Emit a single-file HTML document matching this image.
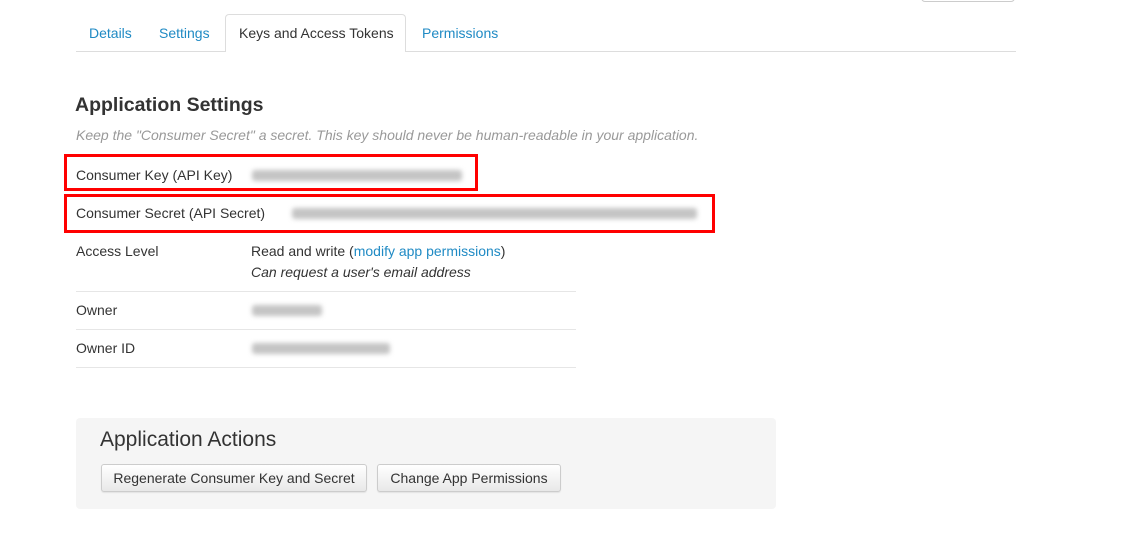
<!DOCTYPE html>
<html><head><style>
body{margin:0;width:1126px;height:534px;background:#fff;font-family:"Liberation Sans",sans-serif;font-size:14px;color:#333;position:relative;overflow:hidden}
.a{position:absolute}
.tab{position:absolute;top:25px;color:#1f8ac4;font-size:14px}
.blur{position:absolute;height:11px;background:#c4c4c4;filter:blur(2.5px);border-radius:3px}
.hr{position:absolute;left:76px;width:500px;height:1px;background:#e6e6e6}
.btn{position:absolute;top:464px;height:28px;border:1px solid #ccc;border-radius:3px;background:linear-gradient(#fff,#e8e8e8);box-sizing:border-box;font-size:14px;line-height:27px;text-align:center;color:#333;box-shadow:0 1px 1px rgba(0,0,0,.08)}
</style></head><body>
<div class="a" style="left:921px;top:-6px;width:94px;height:8px;border:1px solid #ccc;border-radius:4px;box-sizing:border-box"></div>
<div class="a" style="left:76px;top:51px;width:940px;height:1px;background:#ddd"></div>
<div class="a" style="left:225px;top:14px;width:181px;height:38px;border:1px solid #ddd;border-bottom:none;border-radius:4px 4px 0 0;background:#fff;box-sizing:border-box"></div>
<div class="tab" style="left:89px">Details</div>
<div class="tab" style="left:159px">Settings</div>
<div class="tab" style="left:239px;color:#333">Keys and Access Tokens</div>
<div class="tab" style="left:422px">Permissions</div>
<div class="a" style="left:75px;top:94px;font-size:19.5px;font-weight:bold;color:#333">Application Settings</div>
<div class="a" style="left:76px;top:127px;font-size:14px;font-style:italic;color:#999">Keep the "Consumer Secret" a secret. This key should never be human-readable in your application.</div>
<div class="a" style="left:64px;top:154px;width:414px;height:37px;border:3px solid #f00;box-sizing:border-box"></div>
<div class="a" style="left:64px;top:194px;width:651px;height:39px;border:3px solid #f00;box-sizing:border-box"></div>
<div class="a" style="left:76px;top:167px">Consumer Key (API Key)</div>
<div class="blur" style="left:252px;top:170px;width:210px"></div>
<div class="a" style="left:76px;top:205px">Consumer Secret (API Secret)</div>
<div class="blur" style="left:292px;top:208px;width:405px"></div>
<div class="a" style="left:76px;top:243px">Access Level</div>
<div class="a" style="left:251px;top:243px">Read and write (<span style="color:#1f8ac4">modify app permissions</span>)</div>
<div class="a" style="left:251px;top:264px;font-style:italic">Can request a user's email address</div>
<div class="hr" style="top:291px"></div>
<div class="a" style="left:76px;top:302px">Owner</div>
<div class="blur" style="left:252px;top:305px;width:70px"></div>
<div class="hr" style="top:329px"></div>
<div class="a" style="left:76px;top:340px">Owner ID</div>
<div class="blur" style="left:252px;top:343px;width:138px"></div>
<div class="hr" style="top:367px"></div>
<div class="a" style="left:76px;top:418px;width:700px;height:91px;background:#f5f5f5;border-radius:4px"></div>
<div class="a" style="left:100px;top:428px;font-size:21px;color:#333">Application Actions</div>
<div class="btn" style="left:101px;width:266px">Regenerate Consumer Key and Secret</div>
<div class="btn" style="left:377px;width:184px">Change App Permissions</div>
</body></html>
